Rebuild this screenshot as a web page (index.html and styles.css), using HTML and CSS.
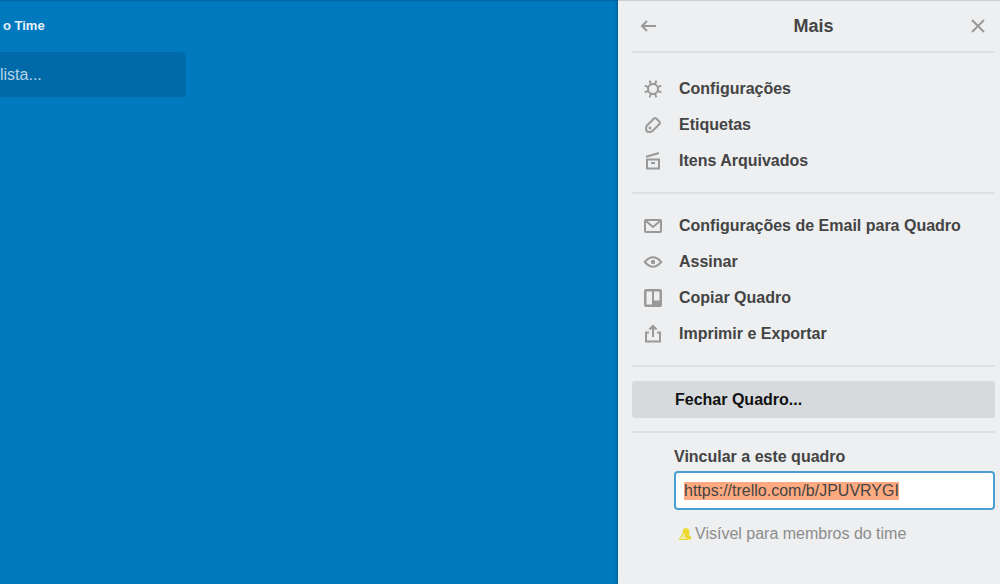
FILE: index.html
```
<!DOCTYPE html>
<html lang="pt-BR">
<head>
    <meta charset="UTF-8">
    <meta name="viewport" content="width=device-width, initial-scale=1.0">
    <title>Quadro</title>
    <link rel="stylesheet" href="styles.css">
</head>
<body>
    <main class="board">
        <a class="board-visibility" href="#">o Time</a>
        <button class="add-list" type="button">lista...</button>
    </main>

    <aside class="menu">
        <header class="menu-header">
            <button class="icon-button" type="button" aria-label="Voltar">
                <svg width="18" height="18" viewBox="0 0 18 18"><path d="M16 9H2M7 4L2 9l5 5"/></svg>
            </button>
            <h1>Mais</h1>
            <button class="icon-button" type="button" aria-label="Fechar">
                <svg width="18" height="18" viewBox="0 0 18 18"><path d="M3 3l12 12M15 3L3 15"/></svg>
            </button>
        </header>

        <nav class="menu-list first">
            <a href="#">
                <svg width="20" height="20" viewBox="0 0 20 20"><circle cx="10" cy="10" r="5"/><path d="M14.600 11.900l3.700 1.500M11.900 14.600l1.500 3.700M8.100 14.600l-1.500 3.700M5.400 11.900l-3.700 1.500M5.400 8.100L1.700 6.600M8.100 5.400L6.600 1.700M11.900 5.400l1.500-3.700M14.600 8.100l3.700-1.500"/></svg>
                Configurações
            </a>
            <a href="#">
                <svg width="20" height="20" viewBox="0 0 20 20"><path d="M11 3.500Q12 2.500 13.200 3.500L16.500 6.800Q17.500 8 16.500 9L9.500 16Q8.500 17 6.500 17Q3 17 3 13.500Q3 11.500 4 10.500Z"/><circle class="solid" cx="7" cy="13" r="1.400"/></svg>
                Etiquetas
            </a>
            <a href="#">
                <svg width="20" height="20" viewBox="0 0 20 20"><path d="M3 5.800L16 2M4 8.500h12v9H4zM8 12h4"/></svg>
                Itens Arquivados
            </a>
        </nav>

        <nav class="menu-list">
            <a href="#">
                <svg width="20" height="20" viewBox="0 0 20 20"><rect x="2" y="4" width="16" height="12" rx="1"/><path d="M3 5l7 6 7-6"/></svg>
                Configurações de Email para Quadro
            </a>
            <a href="#">
                <svg width="20" height="20" viewBox="0 0 20 20"><path d="M1.800 10Q10 0.500 18.200 10Q10 19.500 1.800 10z"/><circle class="solid" cx="10" cy="10" r="2.200"/></svg>
                Assinar
            </a>
            <a href="#">
                <svg width="20" height="20" viewBox="0 0 20 20"><path class="solid" fill-rule="evenodd" d="M3 1h14q2 0 2 2v14q0 2-2 2H3q-2 0-2-2V3q0-2 2-2zM3.500 3.500v13h5.500v-13zM11 3.500v9h5.500v-9z"/></svg>
                Copiar Quadro
            </a>
            <a href="#">
                <svg width="20" height="20" viewBox="0 0 20 20"><path d="M6 8.500H3v9h14v-9h-3M10 13V2M6.500 5.500L10 2l3.500 3.500"/></svg>
                Imprimir e Exportar
            </a>
        </nav>

        <div class="menu-close">
            <button class="close-board" type="button">Fechar Quadro...</button>
        </div>

        <div class="menu-link">
            <label for="board-url">Vincular a este quadro</label>
            <input id="board-url" type="text" value="https://trello.com/b/JPUVRYGI" readonly>
            <p class="visibility">
                <svg width="14" height="14" viewBox="0 0 14 14"><path class="back" d="M5 5Q5 1.500 8 1.500T11 5Q11 7 10 8Q13 9 13 12H9Z"/><path d="M4 6.500Q5.500 5 7 6.500Q7.500 8 6.500 9Q9.500 10 9.500 12.500H1.500Q1.500 10 4.500 9Q3.500 8 4 6.500z"/></svg>
                Visível para membros do time
            </p>
        </div>
    </aside>

    <script>
        var url = document.getElementById('board-url');
        url.focus();
        url.select();
    </script>
</body>
</html>
```
FILE: styles.css
```
* {
    box-sizing: border-box;
}

body {
    margin: 0;
    min-height: 100vh;
    display: flex;
    background-color: #0079bf;
    font-family: "Liberation Sans", Arial, sans-serif;
    font-size: 16px;
    line-height: 20px;
    color: #444;
    box-shadow: inset 0 2px 1px -1px rgba(0, 0, 0, 0.15);
}

button,
input {
    font: inherit;
}

button {
    border: none;
    cursor: pointer;
}

a {
    color: inherit;
    text-decoration: none;
}

svg {
    flex: none;
    fill: none;
    stroke: #999;
    stroke-width: 2;
}

svg .solid {
    fill: #999;
    stroke: none;
}

.board {
    flex: 1;
    display: flex;
    flex-direction: column;
    align-items: flex-start;
    gap: 16px;
    padding-top: 16px;
}

.board-visibility {
    padding-left: 3px;
    font-size: 13px;
    font-weight: bold;
    color: #e4f0f8;
}

.add-list {
    width: 186px;
    height: 45px;
    padding: 0;
    border-radius: 0 4px 4px 0;
    background-color: #006aa8;
    color: #b5d5e8;
    text-align: left;
}

.menu {
    width: 382px;
    padding: 0 5px 0 14px;
    background-color: #edeff0;
    box-shadow: inset 0 2px 1px -1px rgba(0, 0, 0, 0.15), 0 0 3px rgba(0, 0, 0, 0.5);
}

.menu-header {
    height: 53px;
    padding-top: 1px;
    display: flex;
    align-items: center;
    justify-content: space-between;
    border-bottom: 2px solid #dde1e3;
}

.menu-header h1 {
    margin: 0;
    font-size: 18px;
}

.icon-button {
    display: flex;
    padding: 8px;
    background: none;
}

.menu-list {
    padding: 14px 11px 13px;
    border-bottom: 2px solid #dde1e3;
}

.menu-list.first {
    padding-top: 18px;
}

.menu-list a {
    height: 36px;
    display: flex;
    align-items: center;
    gap: 16px;
    font-weight: bold;
}

.menu-close {
    padding: 14px 0 13px;
    border-bottom: 2px solid #dde1e3;
}

.close-board {
    width: 100%;
    height: 37px;
    padding: 0 43px;
    border-radius: 3px;
    background-color: #d6dadc;
    color: #111;
    font-weight: bold;
    text-align: left;
}

.menu-link {
    padding: 14px 0 0 42px;
}

.menu-link label {
    display: block;
    margin-bottom: 4px;
    font-weight: bold;
}

.menu-link input {
    display: block;
    width: 100%;
    height: 39px;
    padding: 0 8px;
    border: 2px solid #4a9fd2;
    border-radius: 4px;
    outline: none;
    background-color: #fff;
    color: #444;
}

.menu-link input::selection {
    background-color: #ffaa80;
    color: #444;
}

.visibility {
    display: flex;
    align-items: center;
    gap: 3px;
    margin: 14px 0 0 4px;
    color: #8c8c8c;
}

.visibility svg {
    fill: #f1ecae;
    stroke: #ecd92c;
    stroke-width: 1;
}

.visibility .back {
    fill: #ecd92c;
}
```
